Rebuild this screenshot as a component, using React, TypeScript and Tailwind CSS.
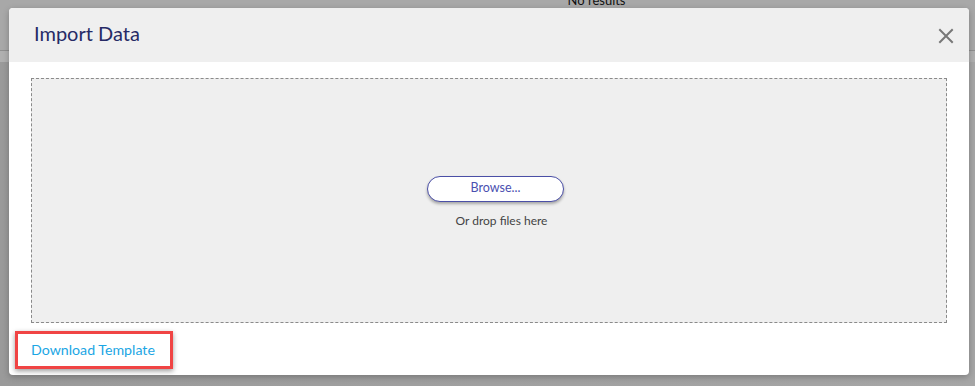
import React from "react";

export default function App() {
  return (
    <div
      className="relative h-[386px] w-[975px] overflow-hidden bg-[#a8a8a8]"
      style={{ fontFamily: "Lato, 'Open Sans', sans-serif" }}
    >
      {/* background page */}
      <div className="flex h-[51px] justify-center border-b border-[#8f8f8f]">
        <span className="ml-[218px] mt-[-9px] text-[13px] text-[#111]">No results</span>
      </div>
      <div className="h-[11px] bg-[#b0b0b0]" />
      <div className="h-full bg-gradient-to-r from-[#9a9a9a] to-[#a6a6a6]" />

      {/* modal */}
      <div className="absolute left-[9px] top-[8px] flex h-[367px] w-[960px] flex-col overflow-hidden rounded-[4px] bg-white shadow-[0_2px_6px_rgba(0,0,0,0.25)]">
        <div className="flex h-[54px] shrink-0 items-center justify-between bg-[#efefef] pl-[25px] pr-[15px]">
          <h1 className="mb-[4px] text-[20px] leading-none text-[#262a66]">Import Data</h1>
          <svg width="16" height="16" viewBox="0 0 16 16" className="mt-[2px]">
            <path d="M2 2 L14 14 M14 2 L2 14" stroke="#777" strokeWidth="2" strokeLinecap="square" />
          </svg>
        </div>
        <div className="flex flex-1 flex-col px-[22px] pt-[16px]">
          <div className="flex h-[245px] flex-col items-center justify-center border border-dashed border-[#8a8a8a] bg-[#efefef]">
            <button className="ml-[13px] mt-[4px] flex h-[26px] w-[137px] items-center justify-center rounded-full border border-[#4b4fa6] bg-white text-[12.5px] text-[#4a4fb0] shadow-[0_2px_3px_rgba(0,0,0,0.3)]">
              Browse...
            </button>
            <div className="ml-[25px] mt-[10px] text-[12px] text-[#444]">Or drop files here</div>
          </div>
          <div className="ml-[-16px] mt-[8px] flex h-[38px] w-[158px] items-center border-[3px] border-[#f04444] pl-[13px] shadow-[0_2px_5px_rgba(0,0,0,0.4)]">
            <span className="text-[14.2px] text-[#1ba6e4]">Download Template</span>
          </div>
        </div>
      </div>
    </div>
  );
}
